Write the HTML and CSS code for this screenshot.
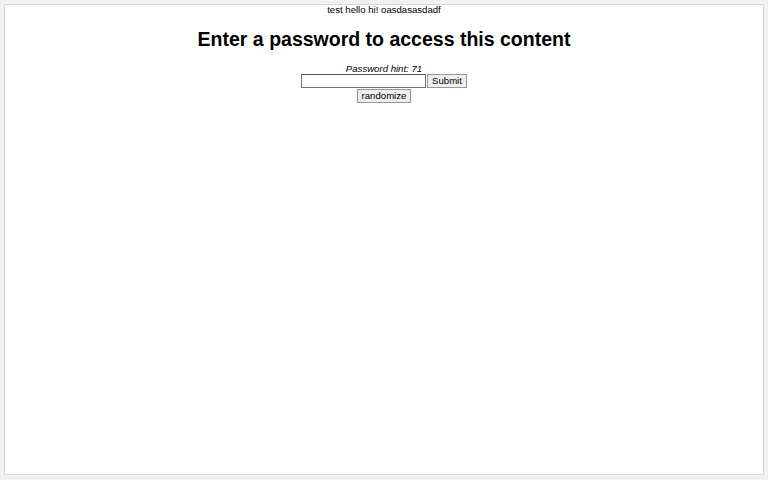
FILE: index.html
```html
<!DOCTYPE html>
<html>
<head>
<meta charset="utf-8">
<link rel="stylesheet" href="styles.css">
</head>
<body>
<div class="frame">
  <div class="note">test hello hi! oasdasasdadf</div>
  <h1 class="title">Enter a password to access this content</h1>
  <form class="gate">
    <div class="hint">Password hint: 71</div>
    <div class="row">
      <input class="field" type="password"><button class="btn" type="button">Submit</button>
    </div>
    <div class="row">
      <button class="btn" type="button">randomize</button>
    </div>
  </form>
</div>
</body>
</html>
```
FILE: styles.css
```css
html, body {
  margin: 0;
  height: 100%;
}
body {
  background: #f1f1f1;
  padding: 4px 4px 5px;
  box-sizing: border-box;
  font-family: "Liberation Sans", Arial, sans-serif;
  color: #000;
}
.frame {
  background: #fff;
  border: 1px solid #d9d9d9;
  height: 100%;
  box-sizing: border-box;
  text-align: center;
}
.note {
  font-size: 9.6px;
  line-height: 10px;
}
.title {
  font-size: 19.5px;
  font-weight: bold;
  margin: 12px 0 12px;
  line-height: 24px;
}
.hint {
  font-size: 9.6px;
  font-style: italic;
  line-height: 11px;
}
.row {
  display: flex;
  justify-content: center;
  align-items: center;
}
.field {
  width: 125px;
  height: 14px;
  box-sizing: border-box;
  border: 1px solid #767676;
  border-top-color: #555;
  padding: 0;
  margin: 0;
}
.btn {
  font-family: "Liberation Sans", Arial, sans-serif;
  font-size: 9.6px;
  height: 14px;
  line-height: 10px;
  padding: 0 4px;
  margin: 0 0 0 1px;
  background: #efefef;
  border: 1px solid #999;
  color: #000;
}
.row + .row .btn {
  margin: 1px 0 0;
}
```
